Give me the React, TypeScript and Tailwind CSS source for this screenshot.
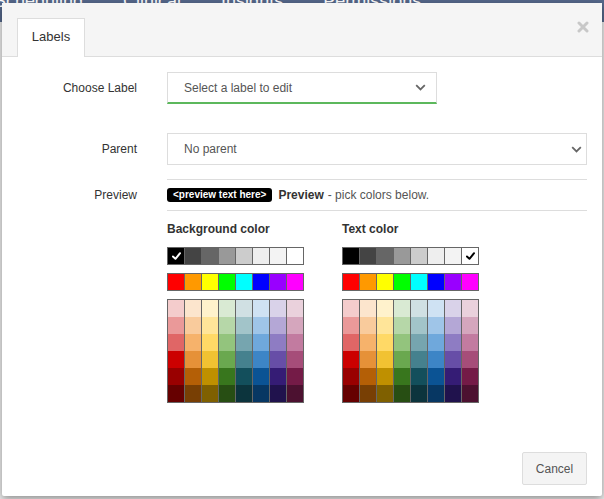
import React from "react";

const topGray = ["#000000", "#444444", "#666666", "#999999", "#cccccc", "#eeeeee", "#f3f3f3", "#ffffff"];
const topBright = ["#ff0000", "#ff9900", "#ffff00", "#00ff00", "#00ffff", "#0000ff", "#9900ff", "#ff00ff"];
const grid = [
  ["#f4cccc", "#fce5cd", "#fff2cc", "#d9ead3", "#d0e0e3", "#cfe2f3", "#d9d2e9", "#ead1dc"],
  ["#ea9999", "#f9cb9c", "#ffe599", "#b6d7a8", "#a2c4c9", "#9fc5e8", "#b4a7d6", "#d5a6bd"],
  ["#e06666", "#f6b26b", "#ffd966", "#93c47d", "#76a5af", "#6fa8dc", "#8e7cc3", "#c27ba0"],
  ["#cc0000", "#e69138", "#f1c232", "#6aa84f", "#45818e", "#3d85c6", "#674ea7", "#a64d79"],
  ["#990000", "#b45f06", "#bf9000", "#38761d", "#134f5c", "#0b5394", "#351c75", "#741b47"],
  ["#660000", "#783f04", "#7f6000", "#274e13", "#0c343d", "#073763", "#20124d", "#4c1130"],
];

function Check({ color }: { color: string }) {
  return (
    <svg width="9" height="8" viewBox="0 0 10 9">
      <path d="M1 5 L3.8 7.6 L9 1.4" fill="none" stroke={color} strokeWidth="2.2" strokeLinecap="round" strokeLinejoin="round" />
    </svg>
  );
}

function SwatchRow({ colors, checkIndex, checkColor }: { colors: string[]; checkIndex?: number; checkColor?: string }) {
  return (
    <div className="flex w-[137px] border border-[#666666]">
      {colors.map((c, i) => (
        <div
          key={i}
          className={`flex h-[16px] items-center justify-center ${i < colors.length - 1 ? "w-[17px] border-r border-[#666666]" : "w-[16px]"}`}
          style={{ backgroundColor: c }}
        >
          {checkIndex === i && <Check color={checkColor || "#fff"} />}
        </div>
      ))}
    </div>
  );
}

function BigGrid() {
  return (
    <div className="flex w-[137px] border border-[#666666]">
      {grid[0].map((_, col) => (
        <div key={col} className={`flex flex-col ${col < 7 ? "w-[17px] border-r border-[#666666]" : "w-[16px]"}`}>
          {grid.map((row, r) => (
            <div key={r} className="h-[17px] w-full" style={{ backgroundColor: row[col] }} />
          ))}
        </div>
      ))}
    </div>
  );
}

function Palette({ title, checkIndex, checkColor }: { title: string; checkIndex: number; checkColor: string }) {
  return (
    <div className="flex flex-col">
      <div className="h-[20px] text-[12px] font-bold leading-[20px] text-[#333333]">{title}</div>
      <div className="mt-[8px]">
        <SwatchRow colors={topGray} checkIndex={checkIndex} checkColor={checkColor} />
      </div>
      <div className="mt-[8px]">
        <SwatchRow colors={topBright} />
      </div>
      <div className="mt-[8px]">
        <BigGrid />
      </div>
    </div>
  );
}

function Chevron() {
  return (
    <svg width="11" height="7" viewBox="0 0 11 7">
      <path d="M1.2 1.2 L5.5 5.4 L9.8 1.2" fill="none" stroke="#666666" strokeWidth="1.8" />
    </svg>
  );
}

export default function App() {
  return (
    <div
      className="relative h-[499px] w-[604px] overflow-hidden bg-[#ececec]"
      style={{ fontFamily: '"Liberation Sans", Arial, sans-serif' }}
    >
      {/* background page */}
      <div className="flex h-[22px] items-start gap-[40px] bg-[#55688b] pt-0">
        <span className="-ml-[6px] -mt-[12px] text-[18px] text-white">Scheduling</span>
        <span className="-mt-[12px] text-[18px] text-white">Clinical</span>
        <span className="-mt-[12px] text-[18px] text-white">Insights</span>
        <span className="-mt-[12px] text-[18px] text-white">Permissions</span>
      </div>

      {/* modal */}
      <div className="absolute left-[2px] top-[3px] flex h-[493px] w-[600px] flex-col rounded-[2px] bg-white shadow-[0_3px_9px_rgba(0,0,0,0.4)]">
        {/* header */}
        <div className="relative h-[54px] shrink-0 border-b border-[#dddddd] bg-[#f5f5f5]">
          <div className="absolute left-[15px] top-[15px] flex h-[39px] w-[68px] items-center justify-center border border-b-0 border-[#dddddd] bg-white pb-[2px] text-[13px] text-[#333333]">
            Labels
          </div>
          <div className="absolute right-[13px] top-[18px]">
            <svg width="12" height="12" viewBox="0 0 12 12">
              <path d="M2 2 L10 10 M10 2 L2 10" stroke="#c8c8c8" strokeWidth="3" strokeLinecap="round" />
            </svg>
          </div>
        </div>

        {/* body */}
        <div className="flex flex-1 flex-col px-[15px] pt-[15px] text-[12px]">
          <div className="flex items-center gap-[30px]">
            <div className="w-[120px] text-right text-[#333333]">Choose Label</div>
            <div className="flex h-[32px] w-[270px] items-center justify-between border border-b-2 border-[#dddddd] border-b-[#5cb85c] pl-[16px] pr-[10px] text-[#555555]">
              <span>Select a label to edit</span>
              <Chevron />
            </div>
          </div>

          <div className="mt-[29px] flex items-center gap-[30px]">
            <div className="w-[120px] text-right text-[#333333]">Parent</div>
            <div className="flex h-[32px] w-[420px] items-center justify-between border border-[#dddddd] pl-[16px] pr-[4px] text-[#555555]">
              <span>No parent</span>
              <Chevron />
            </div>
          </div>

          <div className="mt-[14px] flex gap-[30px]">
            <div className="w-[120px]" />
            <div className="w-[420px] border-t border-[#dddddd]" />
          </div>

          <div className="flex h-[30px] items-center gap-[30px]">
            <div className="w-[120px] text-right text-[#333333]">Preview</div>
            <div className="flex items-center">
              <span className="rounded-[3px] bg-black px-[6px] text-[10px] font-bold leading-[14px] text-white">
                &lt;preview text here&gt;
              </span>
              <span className="ml-[6px] font-bold text-[#333333]">Preview</span>
              <span className="ml-[4px] text-[#555555]">- pick colors below.</span>
            </div>
          </div>

          <div className="flex gap-[30px]">
            <div className="w-[120px]" />
            <div className="w-[420px] border-t border-[#dddddd]" />
          </div>

          <div className="mt-[8px] flex gap-[30px]">
            <div className="w-[120px]" />
            <div className="flex gap-[38px]">
              <Palette title="Background color" checkIndex={0} checkColor="#ffffff" />
              <Palette title="Text color" checkIndex={7} checkColor="#000000" />
            </div>
          </div>
        </div>

        {/* footer */}
        <div className="flex justify-end px-[15px] pb-[11px]">
          <button className="h-[33px] w-[65px] rounded-[2px] border border-[#dddddd] bg-[#f4f4f4] text-[12px] text-[#555555]">
            Cancel
          </button>
        </div>
      </div>
    </div>
  );
}
